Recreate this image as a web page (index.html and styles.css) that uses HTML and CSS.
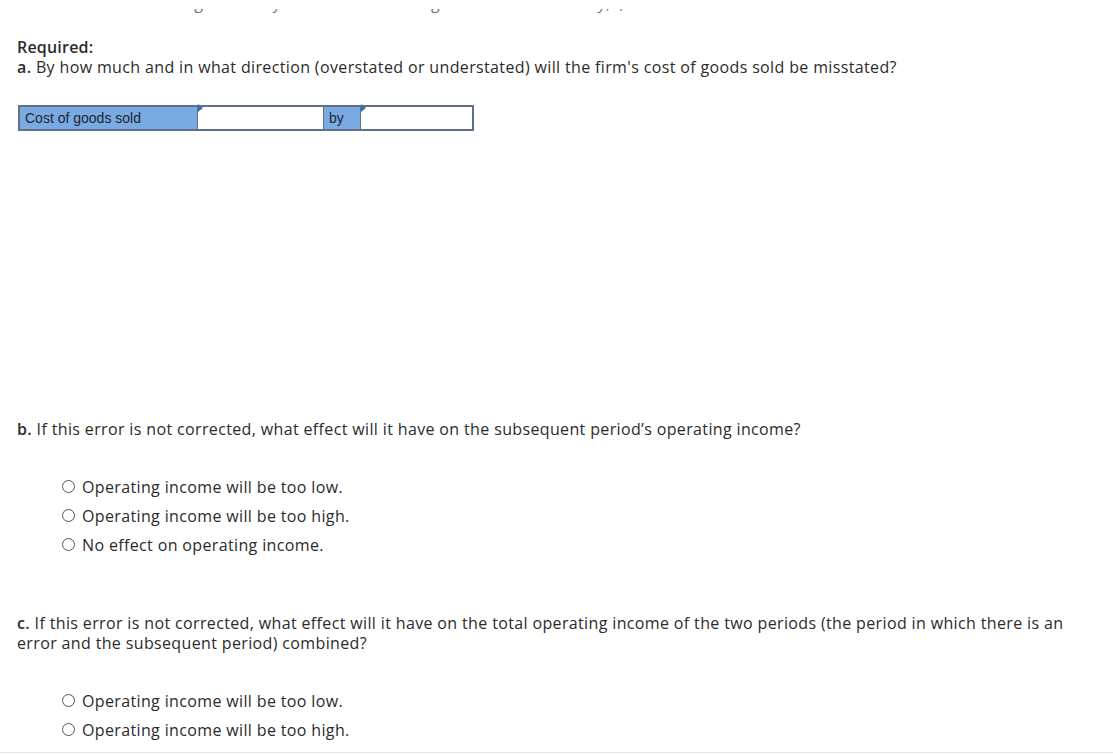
FILE: index.html
```html
<!DOCTYPE html>
<html>
<head>
<meta charset="utf-8">
<link rel="stylesheet" href="styles.css">
</head>
<body>
<div class="page">
  <div class="clip"><p class="cut">                                     ng             ity                               ng                                try,  ,</p></div>
  <div class="req">
    <div class="req-title">Required:</div>
    <div class="q"><b>a.</b> By how much and in what direction (overstated or understated) will the firm's cost of goods sold be misstated?</div>
  </div>
  <table class="grid">
    <tr>
      <td class="lbl lbl-main">Cost of goods sold</td>
      <td class="inp inp-a"><span class="tri"></span></td>
      <td class="lbl lbl-by">by</td>
      <td class="inp inp-b"><span class="tri"></span></td>
    </tr>
  </table>
  <div class="q q-b"><b>b.</b> If this error is not corrected, what effect will it have on the subsequent period’s operating income?</div>
  <ul class="opts opts-b">
    <li><span class="radio"></span>Operating income will be too low.</li>
    <li><span class="radio"></span>Operating income will be too high.</li>
    <li><span class="radio"></span>No effect on operating income.</li>
  </ul>
  <div class="q q-c"><b>c.</b> If this error is not corrected, what effect will it have on the total operating income of the two periods (the period in which there is an error and the subsequent period) combined?</div>
  <ul class="opts opts-c">
    <li><span class="radio"></span>Operating income will be too low.</li>
    <li><span class="radio"></span>Operating income will be too high.</li>
  </ul>
</div>
<div class="rule"></div>
</body>
</html>
```
FILE: styles.css
```css
html, body {
  margin: 0;
  padding: 0;
  background: #fff;
}
body {
  font-family: "Open Sans", Lato, sans-serif;
  font-size: 16px;
  letter-spacing: 0.36px;
  color: #2b2b2b;
  height: 755px;
  overflow: hidden;
  position: relative;
}
.page {
  padding-left: 17px;
  padding-right: 46px;
}
.clip {
  margin-top: 9px;
  height: 7px;
  overflow: hidden;
}
.cut {
  margin: -16px 0 0 0;
  white-space: pre;
  color: #777;
  line-height: 20px;
}
.req {
  margin-top: 21px;
  line-height: 20px;
}
.req-title {
  font-weight: 600;
  letter-spacing: 0.2px;
}
.q b {
  font-weight: 600;
}
.grid {
  margin-top: 28px;
  margin-left: 1px;
  border-collapse: collapse;
  border: 2px solid #5e7186;
  font-family: "Liberation Sans", Arial, sans-serif;
  font-size: 14px;
  letter-spacing: 0;
  color: #1c2633;
}
.grid td {
  height: 22px;
  padding: 0;
  border: 1px solid #5e7186;
  vertical-align: middle;
  position: relative;
}
.lbl {
  background: #7aaae2;
}
.lbl-main {
  width: 172px;
  padding-left: 5px !important;
}
.lbl-by {
  width: 31px;
  padding-left: 5px !important;
}
.inp {
  background: #fff;
}
.inp-a { width: 125px; }
.inp-b { width: 111px; }
.tri {
  position: absolute;
  left: 0;
  top: -3px;
  width: 0;
  height: 0;
  border-top: 4px solid transparent;
  border-bottom: 4px solid transparent;
  border-left: 5px solid #3d6fa8;
}
.q-b {
  margin-top: 288px;
  line-height: 20px;
}
.opts {
  list-style: none;
  margin: 0;
  padding: 0 0 0 45px;
}
.opts li {
  display: flex;
  align-items: center;
  height: 29px;
}
.opts-b {
  margin-top: 33px;
}
.radio {
  width: 11px;
  height: 11px;
  border: 1px solid #555;
  border-radius: 50%;
  margin-right: 7px;
  flex: none;
}
.q-c {
  margin-top: 54px;
  line-height: 20px;
}
.opts-c {
  margin-top: 33px;
}
.rule {
  position: absolute;
  left: 0;
  right: 0;
  top: 752px;
  height: 1px;
  background: #e6e6e6;
}
```
